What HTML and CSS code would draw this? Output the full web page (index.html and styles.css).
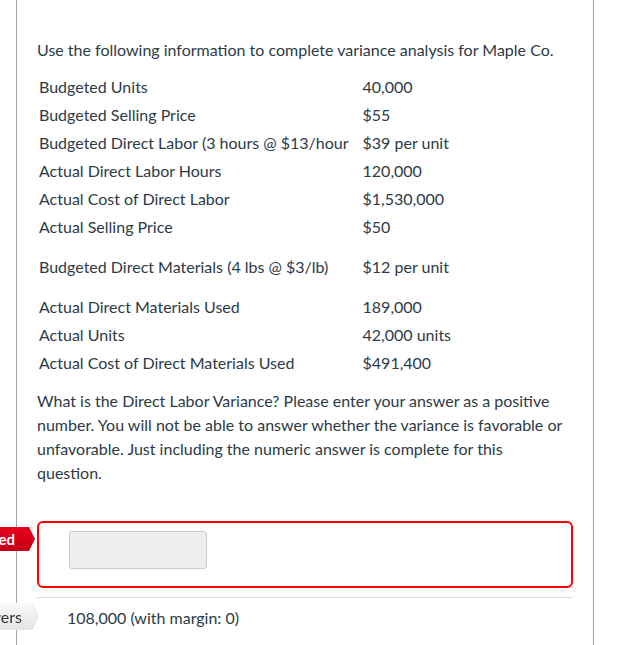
FILE: index.html
```html
<!DOCTYPE html>
<html lang="en">
<head>
    <meta charset="UTF-8">
    <meta name="viewport" content="width=device-width, initial-scale=1.0">
    <title>Quiz Results - Direct Labor Variance</title>
    <link rel="stylesheet" href="styles.css">
</head>
<body>
    <div class="question">
        <div class="question-text">
            <p class="intro">Use the following information to complete variance analysis for Maple Co.</p>
            <table class="data-table">
                <tr><td>Budgeted Units</td><td>40,000</td></tr>
                <tr><td>Budgeted Selling Price</td><td>$55</td></tr>
                <tr><td>Budgeted Direct Labor (3 hours @ $13/hour</td><td>$39 per unit</td></tr>
                <tr><td>Actual Direct Labor Hours</td><td>120,000</td></tr>
                <tr><td>Actual Cost of Direct Labor</td><td>$1,530,000</td></tr>
                <tr><td>Actual Selling Price</td><td>$50</td></tr>
                <tr class="spaced"><td>Budgeted Direct Materials (4 lbs @ $3/lb)</td><td>$12 per unit</td></tr>
                <tr><td>Actual Direct Materials Used</td><td>189,000</td></tr>
                <tr><td>Actual Units</td><td>42,000 units</td></tr>
                <tr><td>Actual Cost of Direct Materials Used</td><td>$491,400</td></tr>
            </table>
            <p class="prompt">What is the Direct Labor Variance? Please enter your answer as a positive number. You will not be able to answer whether the variance is favorable or unfavorable. Just including the numeric answer is complete for this question.</p>
        </div>

        <div class="answers">
            <div class="answer wrong-answer">
                <span class="answer-tag tag-red"><span class="tag-body">You Answered</span></span>
                <input type="text" class="answer-input" disabled>
            </div>
            <div class="answer correct-answer">
                <span class="answer-tag tag-gray"><span class="tag-body">Correct Answers</span></span>
                <span class="answer-text">108,000 (with margin: 0)</span>
            </div>
        </div>
    </div>
</body>
</html>
```

FILE: styles.css
```css
body {
    margin: 0;
    font-family: Lato, "Open Sans", sans-serif;
    color: #2d3b45;
    background-color: #fff;
}
.question {
    margin-left: 16px;
    width: 578px;
    min-height: 645px;
    border-left: 1px solid #a5a5a5;
    border-right: 1px solid #a5a5a5;
    box-sizing: border-box;
    padding: 0 20px;
}
.question-text {
    padding-top: 39px;
    padding-right: 6px;
    font-size: 16px;
}
.question-text p {
    margin: 0;
    line-height: 22px;
}
.data-table {
    border-collapse: collapse;
    margin-top: 12px;
}
.data-table td {
    padding: 0 2px;
    height: 28px;
    line-height: 28px;
    white-space: nowrap;
}
.data-table td:first-child {
    padding-right: 12px;
}
.data-table .spaced td {
    padding-top: 12px;
    padding-bottom: 12px;
}
.question-text .prompt {
    margin-top: 12px;
    line-height: 24px;
}
.answers {
    margin-top: 36px;
}
.answer {
    position: relative;
}
.wrong-answer {
    border: 2px solid #f00;
    border-radius: 6px;
    height: 67px;
    box-sizing: border-box;
    padding: 8px 30px;
}
.answer-input {
    display: block;
    width: 138px;
    height: 38px;
    box-sizing: border-box;
    background-color: #eee;
    border: 1px solid #ccc;
    border-radius: 3px;
}
.correct-answer {
    margin-top: 9px;
    border-top: 1px solid #ddd;
    padding: 8px 30px;
    font-size: 16px;
    line-height: 24px;
}
.answer-tag {
    position: absolute;
    top: 5px;
    font-size: 16px;
    white-space: nowrap;
}
.tag-body {
    display: block;
    padding: 0 13px 0 10px;
    clip-path: polygon(0 0, calc(100% - 6px) 0, 100% 50%, calc(100% - 6px) 100%, 0 100%);
}
.tag-red {
    top: 4px;
    right: calc(100% + 4px);
    font-size: 15px;
    font-weight: bold;
}
.tag-red .tag-body {
    line-height: 24px;
    padding-right: 20px;
    color: #fff;
    background: linear-gradient(#e8001c, #c4001a);
}
.tag-gray {
    right: calc(100% - 1px);
    filter: drop-shadow(0 0 0.6px #999);
}
.tag-gray .tag-body {
    line-height: 27px;
    padding-right: 16px;
    color: #333;
    background: linear-gradient(#fbfbfb, #e4e4e4);
}
```
